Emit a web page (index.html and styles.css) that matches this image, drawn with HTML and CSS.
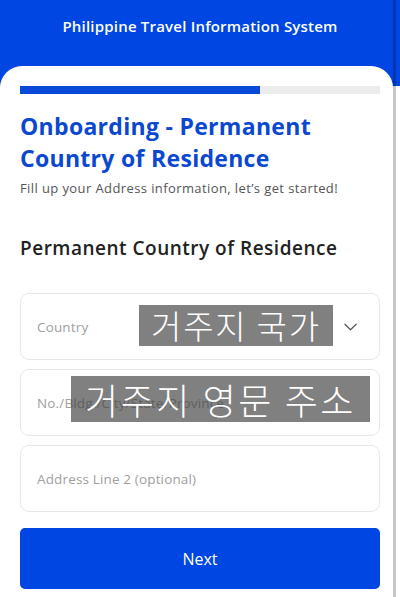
FILE: index.html
```html
<!DOCTYPE html>
<html lang="en">
<head>
<meta charset="utf-8">
<link rel="stylesheet" href="styles.css">
</head>
<body>
<div class="scrollbar"></div>
<header class="topbar">
  <h1 class="app-title">Philippine Travel Information System</h1>
</header>
<main class="card">
  <div class="progress"><div class="progress-fill" style="width:66.7%"></div></div>
  <h2 class="page-title">Onboarding - Permanent Country of Residence</h2>
  <p class="subtitle">Fill up your Address information, let’s get started!</p>
  <h3 class="section-title">Permanent Country of Residence</h3>
  <div class="fields">
    <div class="field">
      <span class="placeholder">Country</span>
      <svg class="chevron" width="14" height="8" viewBox="0 0 14 8"><path d="M1 1l6 6 6-6" fill="none" stroke="#555" stroke-width="1.3" stroke-linecap="round" stroke-linejoin="round"/></svg>
      <div class="mask mask-1">거주지 국가</div>
    </div>
    <div class="field">
      <span class="placeholder">No./Bldg./City/State/Province</span>
      <div class="mask mask-2">거주지 영문 주소</div>
    </div>
    <div class="field">
      <span class="placeholder">Address Line 2 (optional)</span>
    </div>
  </div>
  <button class="next-btn">Next</button>
</main>
</body>
</html>
```
FILE: styles.css
```css
html, body {
  margin: 0;
  padding: 0;
  background: #ffffff;
  font-family: "Open Sans", "Liberation Sans", sans-serif;
}
body {
  position: relative;
  width: 400px;
  height: 597px;
  overflow: hidden;
}
.scrollbar {
  position: absolute;
  top: 0;
  right: 4px;
  width: 3px;
  height: 597px;
  background: rgba(0, 0, 0, 0.22);
  z-index: 5;
}
.topbar {
  background: #0046e2;
  height: 86px;
  display: flex;
  justify-content: center;
  padding-top: 14px;
  box-sizing: border-box;
}
.app-title {
  margin: 0;
  color: #ffffff;
  font-size: 15px;
  font-weight: 600;
  letter-spacing: 0.2px;
  line-height: 24px;
}
.card {
  margin-top: -20px;
  width: 393px;
  background: #ffffff;
  border-radius: 22px 22px 0 0;
  padding: 20px 13px 0 20px;
  box-sizing: border-box;
  height: 531px;
}
.progress {
  width: 360px;
  height: 8px;
  background: #ececec;
}
.progress-fill {
  height: 100%;
  background: #0a4ad8;
}
.page-title {
  margin: 16px 0 0;
  color: #0a48d2;
  font-size: 23px;
  font-weight: 700;
  letter-spacing: 0.3px;
  line-height: 32px;
  width: 330px;
}
.subtitle {
  margin: 5px 0 0;
  color: #555555;
  font-size: 13px;
  letter-spacing: 0.4px;
  line-height: 18px;
}
.section-title {
  margin: 39px 0 0;
  color: #222222;
  font-size: 19px;
  font-weight: 600;
  letter-spacing: 0.5px;
  line-height: 24px;
}
.fields {
  margin-top: 33px;
  display: flex;
  flex-direction: column;
  gap: 9px;
  width: 360px;
}
.field {
  position: relative;
  height: 67px;
  border: 1px solid #e7e7e7;
  border-radius: 9px;
  box-sizing: border-box;
  display: flex;
  align-items: center;
  padding: 0 22px 0 16px;
}
.placeholder {
  color: #a0a0a0;
  font-size: 13.5px;
  letter-spacing: 0.15px;
  flex: 1;
}
.chevron {
  width: 13px;
  height: 8px;
}
.mask {
  position: absolute;
  background: rgba(60, 60, 60, 0.65);
  color: #ffffff;
  font-family: "Noto Sans CJK KR", sans-serif;
  font-weight: 300;
  display: flex;
  align-items: center;
  justify-content: center;
  white-space: nowrap;
  line-height: 1;
}
.mask-1 {
  left: 118px;
  top: 11px;
  width: 194px;
  height: 41px;
  font-size: 33px;
  letter-spacing: 1.8px;
}
.mask-2 {
  left: 50px;
  top: 6px;
  width: 299px;
  height: 46px;
  font-size: 36px;
  letter-spacing: 2.6px;
}
.next-btn {
  margin-top: 16px;
  width: 360px;
  height: 61px;
  border: none;
  border-radius: 5px;
  background: #0046e2;
  color: #ffffff;
  font-family: "Open Sans", "Liberation Sans", sans-serif;
  font-size: 16px;
  display: block;
}
```
